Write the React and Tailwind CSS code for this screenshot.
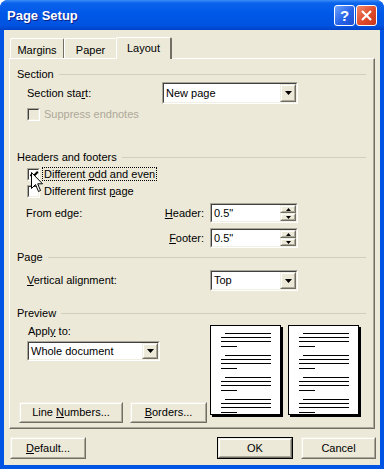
import React from 'react';

const Sunken = ({ className = '', inner = 'bg-white', children }) => (
  <div className={`border border-t-[#ACA899] border-l-[#ACA899] border-r-white border-b-white ${className}`}>
    <div className={`h-full w-full border border-t-[#404040] border-l-[#404040] border-r-[#F1EFE2] border-b-[#F1EFE2] ${inner}`}>
      {children}
    </div>
  </div>
);

const Raised = ({ className = '', children }) => (
  <div className={`border border-t-[#F1EFE2] border-l-[#F1EFE2] border-r-[#716F64] border-b-[#716F64] bg-[#ECE9D8] ${className}`}>
    <div className="h-full w-full flex items-center justify-center border border-t-white border-l-white border-r-[#ACA899] border-b-[#ACA899]">
      {children}
    </div>
  </div>
);

const Tri = ({ up }) => (
  <svg width="7" height="4" viewBox="0 0 7 4">
    <path d={up ? 'M3.5 0 L7 4 L0 4 Z' : 'M0 0 L7 0 L3.5 4 Z'} fill="#000" />
  </svg>
);

const SmallTri = ({ up }) => (
  <svg width="5" height="3" viewBox="0 0 5 3">
    <path d={up ? 'M2.5 0 L5 3 L0 3 Z' : 'M0 0 L5 0 L2.5 3 Z'} fill="#000" />
  </svg>
);

const Combo = ({ value, className }) => (
  <Sunken className={className}>
    <div className="flex h-full">
      <span className="flex-1 pl-[2px] leading-none flex items-center">{value}</span>
      <Raised className="w-[16px] h-full">
        <Tri />
      </Raised>
    </div>
  </Sunken>
);

const Spin = ({ value }) => (
  <Sunken className="w-[88px] h-[20px]">
    <div className="flex h-full">
      <span className="flex-1 pl-[2px] flex items-center">{value}</span>
      <div className="w-[16px] flex flex-col">
        <Raised className="flex-1">
          <SmallTri up />
        </Raised>
        <Raised className="flex-1">
          <SmallTri />
        </Raised>
      </div>
    </div>
  </Sunken>
);

const Check = ({ checked, disabled }) => (
  <Sunken className="w-[13px] h-[13px] shrink-0" inner={disabled ? 'bg-[#ECE9D8]' : 'bg-white'}>
    {checked && (
      <svg width="11" height="11" viewBox="0 0 11 11">
        <polyline points="1.5,4.5 3.8,7 8.8,1.8" fill="none" stroke="#000" strokeWidth="2" />
      </svg>
    )}
  </Sunken>
);

const Heading = ({ label, className = '' }) => (
  <div className={`flex items-center h-[14px] ${className}`}>
    <span>{label}</span>
    <div className="flex-1 h-px bg-[#D0D0BF] ml-[5px]" />
  </div>
);

const Button = ({ children, className = '', def }) => (
  <div className={`${def ? 'border border-black' : ''} ${className}`}>
    <Raised className="w-full h-full">
      <span>{children}</span>
    </Raised>
  </div>
);

const Page = () => (
  <div className="w-[73px] h-[92px] flex">
    <div className="w-[71px] h-[90px] bg-white border border-black shadow-[2px_2px_0_#000] flex flex-col pt-[7px] pl-[10px] gap-[8px]">
      {[0, 1, 2, 3].map((i) => (
        <div key={i} className="flex flex-col gap-[3px]">
          <div className="h-px w-[46px] bg-black ml-[4px]" />
          <div className="h-px w-[50px] bg-black" />
          <div className="h-px w-[50px] bg-black" />
          <div className="h-px w-[16px] bg-black mt-px" />
        </div>
      ))}
    </div>
  </div>
);

export default function App() {
  return (
    <div className="w-[384px] h-[469px] flex flex-col bg-[#0054E3] rounded-t-[8px] overflow-hidden font-['Liberation_Sans',Arial,sans-serif] text-[11px] text-black">
      <div className="h-[30px] shrink-0 flex items-center pl-[7px] pr-[7px] bg-[linear-gradient(to_bottom,#3D8DF7_0%,#0A63EC_10%,#0058E8_45%,#0053E0_85%,#0042C8_100%)]">
        <span className="flex-1 text-white font-bold text-[13px] pt-[2px] [text-shadow:1px_1px_0_#0A1E8C]">Page Setup</span>
        <div className="w-[21px] h-[21px] rounded-[3px] border border-white bg-[linear-gradient(135deg,#6FA2FF_0%,#2663E8_55%,#1D4FD0_100%)] flex items-center justify-center text-white font-bold text-[15px] leading-none">
          ?
        </div>
        <div className="w-[21px] h-[21px] ml-[1px] rounded-[3px] border border-white bg-[linear-gradient(135deg,#F08A6A_0%,#E04A2A_55%,#C8381C_100%)] flex items-center justify-center">
          <svg width="11" height="11" viewBox="0 0 11 11">
            <path d="M1 1 L10 10 M10 1 L1 10" stroke="#fff" strokeWidth="2.2" />
          </svg>
        </div>
      </div>

      <div className="flex-1 mx-[4px] mb-[4px] bg-[#ECE9D8] flex flex-col">
        <div className="h-[28px] pt-[7px] pl-[6px] flex items-end">
          <div className="w-[54px] h-[20px] border-t border-l border-white border-r border-r-[#716F64] rounded-t-[2px] flex items-center justify-center pt-[4px]">
            Margins
          </div>
          <div className="w-[53px] h-[20px] border-t border-l border-white border-r border-r-[#716F64] rounded-t-[2px] flex items-center justify-center pt-[4px]">
            Paper
          </div>
          <div className="relative z-10 -ml-[1px] -mb-px w-[56px] h-[22px] bg-[#ECE9D8] border-t border-l border-white border-r-2 border-r-[#716F64] rounded-t-[2px] flex items-center justify-center">
            Layout
          </div>
        </div>

        <div className="mx-[5px] h-[371px] border-t border-l border-white border-r border-b border-r-[#716F64] border-b-[#716F64] shadow-[inset_-1px_-1px_0_#ACA899] flex flex-col pl-[7px] pr-[8px]">
          <Heading label="Section" className="mt-[8px]" />
          <div className="w-[281px] h-[22px] mt-px flex items-center">
            <span className="flex-1 pl-[10px]">
              Section sta<span className="underline">r</span>t:
            </span>
            <Combo value="New page" className="w-[136px] h-[22px]" />
          </div>
          <div className="h-[14px] mt-[3px] pl-[10px] flex items-center text-[#ACA899]">
            <Check disabled />
            <span className="ml-[4px]">Suppress endnotes</span>
          </div>

          <Heading label="Headers and footers" className="mt-[29px]" />
          <div className="relative h-[16px] mt-[2px] pl-[10px] flex items-center">
            <Check checked />
            <span className="ml-[2px] px-px border border-dotted border-black leading-[12px]">
              Different <span className="underline">o</span>dd and even
            </span>
            <svg className="absolute left-[14px] top-[6px]" width="13" height="21" viewBox="0 0 13 21">
              <path d="M0.5 0.5 L0.5 16.5 L4.5 12.5 L7.5 19.5 L9.5 18.5 L6.7 11.8 L11.5 11.8 Z" fill="#fff" stroke="#000" strokeWidth="1" />
            </svg>
          </div>
          <div className="h-[14px] mt-[2px] pl-[10px] flex items-center">
            <Check />
            <span className="ml-[4px]">
              Different first <span className="underline">p</span>age
            </span>
          </div>
          <div className="w-[281px] h-[20px] mt-[5px] flex items-center">
            <span className="flex-1 pl-[9px]">From edge:</span>
            <span className="mr-[6px]">
              <span className="underline">H</span>eader:
            </span>
            <Spin value={'0.5"'} />
          </div>
          <div className="w-[281px] h-[20px] mt-[5px] flex items-center">
            <span className="flex-1" />
            <span className="mr-[6px]">
              <span className="underline">F</span>ooter:
            </span>
            <Spin value={'0.5"'} />
          </div>

          <Heading label="Page" className="mt-[2px]" />
          <div className="w-[281px] h-[21px] mt-[6px] flex items-center">
            <span className="flex-1 pl-[10px]">
              <span className="underline">V</span>ertical alignment:
            </span>
            <Combo value="Top" className="w-[88px] h-[21px]" />
          </div>

          <Heading label="Preview" className="mt-[15px]" />
          <div className="h-[108px] flex">
            <div className="w-[190px] flex flex-col">
              <span className="h-[14px] mt-[4px] pl-[11px] flex items-center">
                Appl<span className="underline">y</span>&nbsp;to:
              </span>
              <Combo value="Whole document" className="ml-[10px] mt-[3px] w-[133px] h-[20px]" />
              <div className="flex-1" />
              <div className="flex ml-[2px] mb-[5px] gap-[7px]">
                <Button className="w-[104px] h-[21px]">
                  Line <span className="underline">N</span>umbers...
                </Button>
                <Button className="w-[77px] h-[21px]">
                  <span className="underline">B</span>orders...
                </Button>
              </div>
            </div>
            <div className="ml-[3px] mt-[5px] flex gap-[5px]">
              <Page />
              <Page />
            </div>
          </div>
        </div>

        <div className="flex mt-[8px] pl-[6px] pr-[4px]">
          <Button className="w-[76px] h-[22px]">
            <span className="underline">D</span>efault...
          </Button>
          <div className="flex-1" />
          <Button def className="w-[76px] h-[22px]">OK</Button>
          <Button className="w-[75px] h-[22px] ml-[8px]">Cancel</Button>
        </div>
      </div>
    </div>
  );
}
